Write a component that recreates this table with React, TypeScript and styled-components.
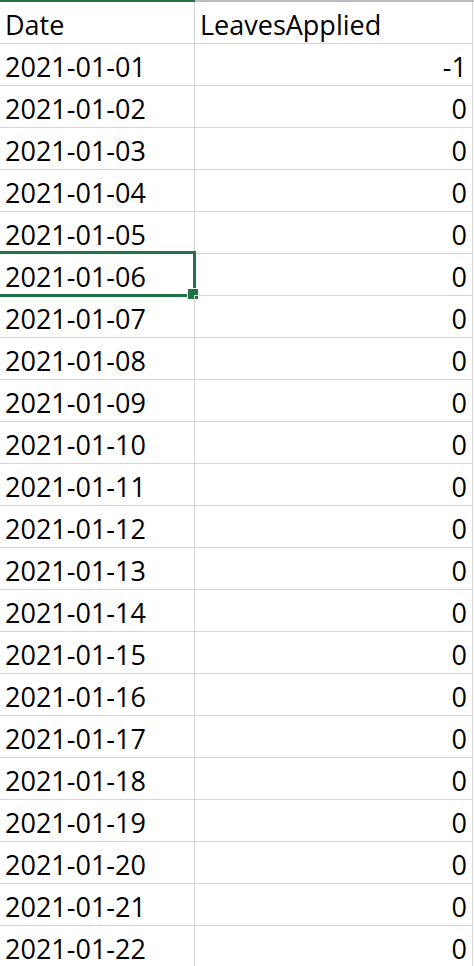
import React from "react";
import styled, { createGlobalStyle } from "styled-components";

const GlobalStyle = createGlobalStyle`
  html, body {
    margin: 0;
    padding: 0;
    background: #ffffff;
    overflow: hidden;
  }
  body {
    font-family: "Open Sans", "Liberation Sans", Arial, sans-serif;
  }
`;

const GREEN = "#217346";
const GRID = "#d4d4d4";

const Sheet = styled.div`
  width: 474px;
  display: flex;
  flex-direction: column;
`;

const TopBar = styled.div`
  display: grid;
  grid-template-columns: 195px 1fr;
  height: 2px;
`;

const TopSeg = styled.div<{ $active?: boolean }>`
  background: ${(p) => (p.$active ? GREEN : "#bcbcbc")};
`;

const Row = styled.div<{ $header?: boolean }>`
  display: grid;
  grid-template-columns: 195px 278px;
  height: ${(p) => (p.$header ? 41 : 42)}px;
`;

const Cell = styled.div<{ $align?: "left" | "right"; $header?: boolean }>`
  position: relative;
  box-sizing: border-box;
  border-right: 1px solid ${GRID};
  border-bottom: 1px solid ${GRID};
  padding: ${(p) => (p.$header ? 4 : 5)}px 5px 0 5px;
  font-size: 27px;
  line-height: 37px;
  color: #000;
  text-align: ${(p) => p.$align ?? "left"};
  white-space: nowrap;
`;

const Selection = styled.div`
  position: absolute;
  top: -2px;
  left: -3px;
  right: -2px;
  bottom: -2px;
  border: 3px solid ${GREEN};
  pointer-events: none;
`;

const Handle = styled.div`
  position: absolute;
  right: -5px;
  bottom: -5px;
  width: 10px;
  height: 10px;
  background: ${GREEN};
  box-shadow: 0 0 0 1px #ffffff;
`;

const rows = Array.from({ length: 22 }, (_, i) => ({
  date: `2021-01-${String(i + 1).padStart(2, "0")}`,
  value: i === 0 ? "-1" : "0",
}));

export default function App() {
  return (
    <>
      <GlobalStyle />
      <Sheet>
        <TopBar>
          <TopSeg $active />
          <TopSeg />
        </TopBar>
        <Row $header>
          <Cell $header>Date</Cell>
          <Cell $header>LeavesApplied</Cell>
        </Row>
        {rows.map((r, i) => (
          <Row key={r.date}>
            <Cell>
              {r.date}
              {i === 5 && (
                <Selection>
                  <Handle />
                </Selection>
              )}
            </Cell>
            <Cell $align="right">{r.value}</Cell>
          </Row>
        ))}
      </Sheet>
    </>
  );
}
